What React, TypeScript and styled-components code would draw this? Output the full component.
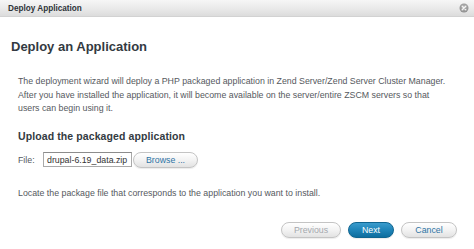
import React from "react";
import styled, { createGlobalStyle } from "styled-components";

const Global = createGlobalStyle`
  html, body { margin: 0; padding: 0; background: #ffffff; }
  body { font-family: "Liberation Sans", Arial, sans-serif; }
  * { box-sizing: border-box; }
`;

const Window = styled.div`
  width: 474px;
  height: 249px;
  display: flex;
  flex-direction: column;
  background: #ffffff;
  overflow: hidden;
`;

const TitleBar = styled.div`
  height: 17px;
  flex: none;
  display: flex;
  align-items: center;
  justify-content: space-between;
  padding: 0 5px 0 8px;
  background: linear-gradient(to bottom, #f6f6f6 0%, #e9e9e9 55%, #dcdcdc 100%);
  border-bottom: 1px solid #d2d2d2;
`;

const Title = styled.div`
  font-size: 8.2px;
  font-weight: bold;
  color: #2e3338;
`;

const Content = styled.div`
  flex: 1;
  display: flex;
  flex-direction: column;
  padding: 22px 16px 0 11px;
`;

const Heading = styled.h1`
  margin: 0;
  font-size: 13px;
  line-height: 15px;
  font-weight: bold;
  color: #333a42;
`;

const Section = styled.div`
  padding-left: 7px;
  display: flex;
  flex-direction: column;
`;

const Paragraph = styled.p<{ $top: number }>`
  margin: ${(p) => p.$top}px 0 0 0;
  font-size: 8.8px;
  line-height: 13.5px;
  color: #55595e;
`;

const SubHeading = styled.h2`
  margin: 14px 0 0 0;
  font-size: 10.5px;
  line-height: 13px;
  font-weight: bold;
  color: #333a42;
  letter-spacing: 0.1px;
`;

const FileRow = styled.div`
  margin-top: 9px;
  display: flex;
  align-items: center;
`;

const Label = styled.span`
  font-size: 8.8px;
  color: #55595e;
  width: 25px;
`;

const FileInput = styled.div`
  width: 89px;
  height: 15px;
  border: 1px solid #a9a9a9;
  border-top-color: #8c8c8c;
  padding: 0 3px;
  display: flex;
  align-items: center;
  font-size: 8.8px;
  color: #333;
  background: #fff;
`;

const Pill = styled.button<{ $variant?: "primary" | "disabled" | "default"; $w: number }>`
  width: ${(p) => p.$w}px;
  height: 16px;
  border-radius: 8px;
  font-family: "Liberation Sans", Arial, sans-serif;
  font-size: 8.8px;
  padding: 0;
  display: flex;
  align-items: center;
  justify-content: center;
  cursor: pointer;
  border: 1px solid
    ${(p) => (p.$variant === "primary" ? "#0f6590" : "#c4c4c4")};
  background: ${(p) =>
    p.$variant === "primary"
      ? "linear-gradient(to bottom, #3a9ccd 0%, #1f84b8 50%, #0d6d9e 100%)"
      : "linear-gradient(to bottom, #ffffff 0%, #f3f3f3 50%, #e2e2e2 100%)"};
  color: ${(p) =>
    p.$variant === "primary" ? "#ffffff" : p.$variant === "disabled" ? "#a4a8ad" : "#2d73a4"};
  box-shadow: 0 1px 1px rgba(0, 0, 0, 0.08);
`;

const BrowseWrap = styled.div`
  margin-left: 1px;
`;

const Footer = styled.div`
  margin-top: auto;
  margin-bottom: 11px;
  display: flex;
  justify-content: flex-end;
  gap: 7px;
  padding-right: 1px;
`;

const CloseIcon = () => (
  <svg width="10" height="10" viewBox="0 0 10 10">
    <defs>
      <radialGradient id="cg" cx="50%" cy="40%" r="60%">
        <stop offset="0%" stopColor="#b9b9b9" />
        <stop offset="100%" stopColor="#8e8e8e" />
      </radialGradient>
    </defs>
    <circle cx="5" cy="5" r="4.5" fill="url(#cg)" />
    <path d="M3.2 3.2 L6.8 6.8 M6.8 3.2 L3.2 6.8" stroke="#f2f2f2" strokeWidth="1.3" strokeLinecap="round" />
  </svg>
);

export default function App() {
  return (
    <>
      <Global />
      <Window>
        <TitleBar>
          <Title>Deploy Application</Title>
          <CloseIcon />
        </TitleBar>
        <Content>
          <Heading>Deploy an Application</Heading>
          <Section>
            <Paragraph $top={21}>
              The deployment wizard will deploy a PHP packaged application in Zend Server/Zend Server Cluster Manager.
              <br />
              After you have installed the application, it will become available on the server/entire ZSCM servers so that
              <br />
              users can begin using it.
            </Paragraph>
            <SubHeading>Upload the packaged application</SubHeading>
            <FileRow>
              <Label>File:</Label>
              <FileInput>drupal-6.19_data.zip</FileInput>
              <BrowseWrap>
                <Pill $w={65} $variant="default">Browse ...</Pill>
              </BrowseWrap>
            </FileRow>
            <Paragraph $top={19}>
              Locate the package file that corresponds to the application you want to install.
            </Paragraph>
          </Section>
          <Footer>
            <Pill $w={60} $variant="disabled">Previous</Pill>
            <Pill $w={46} $variant="primary">Next</Pill>
            <Pill $w={56} $variant="default">Cancel</Pill>
          </Footer>
        </Content>
      </Window>
    </>
  );
}
